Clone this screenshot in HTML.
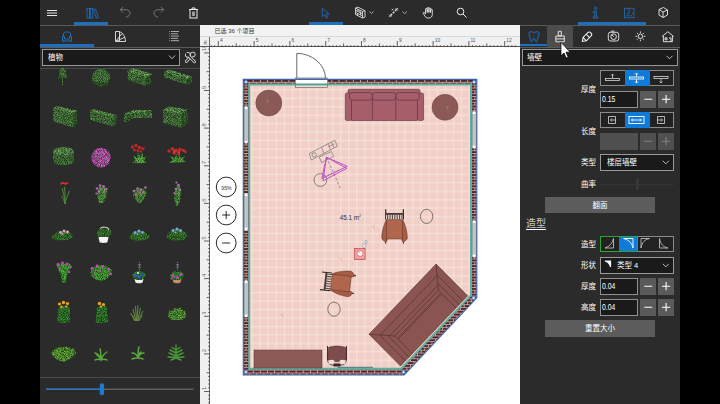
<!DOCTYPE html>
<html lang="zh">
<head>
<meta charset="utf-8">
<title>Floor plan</title>
<style>
html,body{margin:0;padding:0;background:#000;}
body{width:720px;height:404px;overflow:hidden;position:relative;font-family:"Liberation Sans","Noto Sans CJK SC",sans-serif;color:#fff;font-size:7.5px;line-height:1;}
.abs{position:absolute;}
#app{position:absolute;left:40px;top:0;width:640px;height:404px;background:#2b2b2b;overflow:hidden;}
#topbar{position:absolute;left:0;top:0;width:640px;height:25px;background:#2b2b2b;z-index:2;}
.hl{position:absolute;background:#1d6fbf;}
.gl{position:absolute;background:#5a5a5a;height:1px;}
/* left panel */
#left{position:absolute;left:0;top:25px;width:160px;height:379px;background:#2b2b2b;}
.dd{position:absolute;box-sizing:border-box;border:1px solid #979797;background:#1a1a1a;color:#fff;font-weight:400;}
.dd span{position:absolute;left:5px;top:50%;transform:translateY(-50%);margin-top:.8px;white-space:nowrap;}
/* canvas */
#canvas{position:absolute;left:160px;top:25px;width:320px;height:379px;background:#fff;}
#status{position:absolute;left:0;top:0;width:321px;height:12px;background:#f2f2f2;color:#333;}
/* right */
#right{position:absolute;left:480px;top:25px;width:160px;height:379px;background:#2b2b2b;}
.lbl{position:absolute;color:#fff;white-space:nowrap;text-align:right;width:40px;}
.inp{position:absolute;box-sizing:border-box;border:1px solid #909090;background:#1a1a1a;color:#fff;}
.inp span{position:absolute;left:1px;top:50%;font-size:8.200px;transform:translateY(-36%) scaleX(.83);transform-origin:left center;}
.btn{position:absolute;background:#5c5c5c;color:#fff;text-align:center;}
.sq{position:absolute;background:#5a5a5a;width:15.800px;height:16.500px;}
.seg{position:absolute;box-sizing:border-box;border:1px solid #8a8a8a;background:#222;}
</style>
</head>
<body>
<div id="app">
  <div id="topbar">
    <svg class="abs" style="left:0;top:0" width="640" height="26" viewBox="0 0 640 26" fill="none" stroke-linecap="butt">
      <!-- hamburger -->
      <path d="M7 10.5H17M7 13H17M7 15.5H17" stroke="#e6e6e6" stroke-width="1"/>
      <!-- library -->
      <g stroke="#1f74c8" stroke-width=".8" fill="none">
        <rect x="47" y="8.400" width="2.500" height="9.600"/><rect x="50.300" y="8.400" width="2.500" height="9.600"/>
        <path d="M53.600 9.600l2-.6 2.700 8.600-2 .6z"/>
      </g>
      <!-- undo -->
      <g stroke="#757575" stroke-width="1" stroke-linecap="round" stroke-linejoin="round">
        <path d="M82.700 7.300L80.300 9.700L82.700 12.100M80.300 9.700H86C88.500 9.700 90 11.300 90 13.300C90 15.200 88.500 16.600 86.300 17"/>
        <path d="M121.300 7.300L123.700 9.700L121.300 12.100M123.700 9.700H118C115.500 9.700 114 11.300 114 13.300C114 15.200 115.500 16.600 117.700 17"/>
      </g>
      <!-- trash -->
      <g stroke="#eee" stroke-width="1"><rect x="150" y="9.500" width="7" height="8.500"/><path d="M149 9.500h9M152 9.500v-1.500h3v1.500"/><rect x="152" y="11.500" width="3" height="4.500" fill="#999" stroke="none"/></g>
      <!-- cursor -->
      <path d="M282.300 8.300v8.400l2.400-2.100 1.700 3.500 1.300-.600-1.700-3.500h3.400z" stroke="#2468b0" stroke-width=".9"/>
      <!-- wall -->
      <g stroke="#ddd" stroke-width=".9"><path d="M315.500 8l7 3.500v6.500l-7-3.500zM315.500 8l2.500-.8 7 3.500-2.500.8M325 10.700v6.300l-2.500 1"/><path d="M315.500 10.200l7 3.500M315.500 12.400l7 3.500M318 9.300v2.200M320.500 12.700v2.200M317.500 13.500v2.200M320 10.300v2.200"/></g>
      <path d="M329.500 11.500l2 2 2-2" stroke="#bbb" stroke-width=".9"/>
      <!-- measure -->
      <g stroke="#ddd" stroke-width="1"><path d="M350.500 15.500l6-6" stroke-width="1.500" stroke-dasharray="2.200 1"/><path d="M349 14.500l2.600 2.600M349 17.100l2.600-2.600M355.500 8l2.600 2.600M355.500 10.600l2.600-2.600M351.800 8.800l1.500 1.500M351.800 10.300l1.500-1.500" stroke-width=".8"/></g>
      <path d="M362.500 11.500l2.200 2.200 2.200-2.200" stroke="#bbb" stroke-width=".9"/>
      <!-- hand -->
      <path d="M385.500 14V9.300a.85 .85 0 0 1 1.700 0V12.500M387.200 12.500V8.300a.85 .85 0 0 1 1.700 0V12.500M388.900 12.500V8.800a.85 .85 0 0 1 1.700 0V12.500M390.600 12.500V10a.85 .85 0 0 1 1.700 0V14.500C392.300 16.500 391 18 389 18H388C386.500 18 385.500 17.200 384.800 16L383.200 13.300C382.900 12.600 383.800 12 384.400 12.600L385.500 14" stroke="#eee" stroke-width=".85" stroke-linejoin="round"/>
      <!-- search -->
      <g stroke="#eee" stroke-width="1"><circle cx="420.500" cy="11.500" r="3.300"/><path d="M423 14l3.500 3.500"/></g>
      <!-- info -->
      <g fill="#1d6fbf" fill-opacity=".35" stroke="#1d6fbf" stroke-width=".7"><circle cx="555.600" cy="8.300" r="1.200"/><path d="M553.800 11h2.700v5.800h1.300v1.300h-4.800v-1.300h1.300v-4.500h-1.300z"/></g>
      <!-- plan -->
      <g stroke="#2466ad" stroke-width=".9"><rect x="584.500" y="8.300" width="9.500" height="9.400"/><path d="M589 8.500v5h-2M594 13.500h-2M586 15.800h6" /></g>
      <!-- 3d -->
      <g stroke="#eee" stroke-width=".9"><path d="M619 9.500l4.500-2 4 2.500v5l-4.500 2.500-4-2.500z"/><path d="M619 9.500l4 2.500 4.500-2M623 12v5.500"/></g>
    </svg>
    <div class="hl" style="left:34px;top:22.300px;width:34px;height:3.200px"></div>
    <div class="hl" style="left:269px;top:22.300px;width:34px;height:3.200px"></div>
    <div class="hl" style="left:538px;top:22.300px;width:68px;height:3.200px"></div>
    <div class="gl" style="left:0;top:25px;width:160px"></div>
    
  </div>
  <div id="left">
    <div class="gl" style="left:0;top:0;width:160px"></div>
    <div class="hl" style="left:0;top:19px;width:54px;height:3px"></div>
    <div class="gl" style="left:0;top:21.500px;width:160px"></div>
    <div class="dd" style="left:2px;top:24px;width:138px;height:17px"><span>植物</span></div>
    <div class="gl" style="left:0;top:43px;width:160px;background:#4a4a4a"></div>
    <div class="gl" style="left:0;top:352px;width:160px;background:#4a4a4a"></div>
    <svg class="abs" style="left:0;top:0" width="160" height="379" viewBox="40 25 160 379" fill="none">
      <!-- tab icons -->
      <g stroke="#1d6fbf" stroke-width="1"><path d="M63.500 36.500v-2.500c0-1.500 1.500-2 3.500-2s3.500.5 3.500 2v2.500"/><path d="M62.500 36.500h2v2.500h5v-2.500h2v4.500h-9zM63.500 41v1M70.500 41v1"/></g>
      <g stroke="#e8e8e8" stroke-width=".9"><path d="M115.500 31.500h4v10h-4zM119.500 31.800c3.500 1 6 5 6 9.700h-6M116 41l6-7.500M116.500 41.200l8.300-4"/></g>
      <g stroke="#aaa" stroke-width="1"><path d="M171 31.500h8M171 33.800h7M171 36.100h8M171 38.400h7M171 40.700h8"/><path d="M169 31.500h1M169 33.800h1M169 36.100h1M169 38.400h1M169 40.700h1" stroke="#888"/></g>
      <path d="M169 55.500l3 3.200 3-3.200" stroke="#ccc" stroke-width=".9"/>
      <!-- wrench -->
      <g stroke-linecap="round"><path d="M193.300 54L186.300 61.500" stroke="#e4e4e4" stroke-width="2.800"/><circle cx="192.800" cy="54.500" r="2.700" fill="#e4e4e4"/><path d="M193.300 54L186.300 61.500" stroke="#2b2b2b" stroke-width="1.300"/><circle cx="192.800" cy="54.500" r="1.900" fill="#2b2b2b"/><path d="M188 55L194.500 61.800" stroke="#e4e4e4" stroke-width="2.800"/><circle cx="187.800" cy="54.800" r="2.800" fill="#e4e4e4"/><path d="M188 55L194.500 61.800" stroke="#2b2b2b" stroke-width="1.300"/><circle cx="187.800" cy="54.800" r="2" fill="#2b2b2b"/><path d="M186.800 53.800l-2-2" stroke="#2b2b2b" stroke-width="1.600"/></g>
      <!-- slider -->
      <path d="M46 389.200H193.500" stroke="#777" stroke-width="1"/><path d="M46 389.200H101" stroke="#2a74c2" stroke-width="1.400"/><rect x="99.800" y="383.200" width="4.300" height="12" rx="2" fill="#1f7ad6"/>
      
      <defs>
        <filter id="nz" x="0" y="0" width="100%" height="100%" color-interpolation-filters="sRGB"><feTurbulence type="fractalNoise" baseFrequency="1.300" numOctaves="1" seed="4" result="t"/><feColorMatrix in="t" type="matrix" values="2.400 0 0 0 -.700  2.400 0 0 0 -.700  2.400 0 0 0 -.700  0 0 0 0 1" result="n"/><feComposite in="SourceGraphic" in2="n" operator="arithmetic" k1=".850" k2=".450" k3="0" k4="0"/></filter>
      </defs>
      <g filter="url(#nz)">
      <!-- row1 -->
      <path d="M62.500 85v-9M62.500 79l-3-4M62.500 78l3-3" stroke="#4a7a34" stroke-width="1"/><ellipse cx="62.500" cy="72" rx="3.500" ry="4.500" fill="#436f39"/><ellipse cx="60" cy="77" rx="2.500" ry="2" fill="#3d6835"/><ellipse cx="65" cy="76" rx="2.500" ry="2" fill="#3d6835"/>
      <circle cx="101" cy="77.500" r="9.300" fill="#436f39"/><path d="M92 80a9.300 9.300 0 0 0 18 0c-5 3-13 3-18 0z" fill="#305829"/>
      <path d="M127 71l6-3 19 6-1 9-6 3-17-6z" fill="#436f39"/><path d="M127 71l6-3 19 6-6 3z" fill="#58894b"/><path d="M146 77l6-3-1 9-6 3z" fill="#305829"/>
      <path d="M164 72l5-2.500 23 7v6l-5 2-23-7z" fill="#436f39"/><path d="M164 72l5-2.500 23 7-5 2.500z" fill="#58894b"/><path d="M187 79l5-2.500v6l-5 2z" fill="#305829"/>
      <!-- row2 -->
      <path d="M53 108l4-2 20 4.500v14l-4 3-20-6z" fill="#436f39"/><path d="M53 108l4-2 20 4.500-4 2.500z" fill="#58894b"/><path d="M73 113l4-2.500v14l-4 3z" fill="#305829"/>
      <path d="M90 111l3-2 23.500 6v9l-3 2.500-23.500-6.500z" fill="#436f39"/><path d="M90 111l3-2 23.500 6-3 2z" fill="#58894b"/><path d="M113.500 117l3-2v9l-3 2.500z" fill="#305829"/>
      <path d="M124 114l10-4 18 0v8l-18 0-8 4.500-2-1z" fill="#436f39"/><path d="M124 114l10-4h18l-3 2.500h-14l-9 3.500z" fill="#58894b"/><path d="M126 116v6.500l8-4.500v-5z" fill="#355f2d"/>
      <path d="M163 110l6-3.500 18.500 3v13l-6 5.500-18.500-5z" fill="#436f39"/><path d="M163 110l6-3.500 18.500 3-6 4z" fill="#58894b"/><path d="M181.500 113.500l6-4v13l-6 5.500z" fill="#305829"/>
      <!-- row3 -->
      <path d="M53 151v10c0 2.500 4.700 4.500 10.500 4.500s10.500-2 10.500-4.500v-10z" fill="#3d6835"/><ellipse cx="63.500" cy="151" rx="10.500" ry="4" fill="#58894b"/>
      </g>
      <g filter="url(#nz)"><circle cx="101" cy="157.600" r="9.800" fill="#b553ab"/></g><g fill="#3f7d2e"><circle cx="101" cy="155.500" r="1.100"/><circle cx="96" cy="158" r="1.100"/><circle cx="104" cy="160" r="1.100"/><circle cx="107.500" cy="156" r="1"/><circle cx="99" cy="163" r="1"/><circle cx="104" cy="151.500" r="1"/><circle cx="95" cy="153" r="1"/></g>
      <g><g filter="url(#nz)"><path d="M139 163.500l-7-1 3-3-2-4 4 2 1-6 2 5 3-4 0 5 4-1-3 4 3 2z" fill="#4f9a3c"/></g><g fill="#b82a2a"><circle cx="132.500" cy="147" r="1.700"/><circle cx="136" cy="145.500" r="1.700"/><circle cx="139.500" cy="147.500" r="1.800"/><circle cx="143" cy="148.500" r="1.600"/><circle cx="134.500" cy="150" r="1.500"/><circle cx="138" cy="150.500" r="1.500"/><circle cx="141" cy="151.500" r="1.300"/></g></g>
      <g><g filter="url(#nz)"><path d="M177 162.500l-8 .5 4-3-3-4 5 2 1-4 2 4 2-4 1 4 4-2-2 4 3 2z" fill="#4f9a3c"/></g><g fill="#c22c28"><circle cx="169" cy="151" r="1.700"/><circle cx="172.500" cy="149" r="1.800"/><circle cx="176" cy="150.500" r="2"/><circle cx="180" cy="149.500" r="1.800"/><circle cx="183.500" cy="150.500" r="1.700"/><circle cx="185.500" cy="152" r="1.200"/><circle cx="174" cy="153" r="1.700"/><circle cx="178.500" cy="153.500" r="1.700"/></g><g fill="#e8382c"><circle cx="174.500" cy="151.500" r="1.300"/><circle cx="179" cy="152" r="1.200"/></g></g>
      <!-- row4 -->
      <g><path d="M65 204c-.5-6-1-10-3-16M65 204c0-6 .3-10-.5-17M65 204c1-5 2-8 4.500-13M65 204c-1-4-2-6-3.500-8" stroke="#4d8a3c" stroke-width="1"/><path d="M60.500 184l2.500-1.300 2.500 1.300 2.500-1.500" stroke="#d8302a" stroke-width="1.700"/></g>
      <g><g filter="url(#nz)"><path d="M99 203l-2-8 1-6 3-4 4 1 2 5-1 7-3 5z" fill="#4a8a3c"/></g><g fill="#b765b4"><circle cx="97" cy="188.500" r="1.300"/><circle cx="100" cy="185.500" r="1.300"/><circle cx="103.500" cy="186.500" r="1.300"/><circle cx="106.500" cy="189" r="1.200"/><circle cx="99" cy="191.500" r="1.200"/><circle cx="104" cy="192" r="1.200"/><circle cx="96.500" cy="193.500" r="1.100"/><circle cx="101.500" cy="189" r="1.100"/></g></g>
      <g><g filter="url(#nz)"><path d="M138 203l-5-7 1-5 5-3 6 1 2 4-3 6-3 4z" fill="#4a8238"/></g><g fill="#a8709f"><circle cx="134" cy="191" r="1.300"/><circle cx="137.500" cy="188.500" r="1.300"/><circle cx="141" cy="189.500" r="1.300"/><circle cx="145.500" cy="187.500" r="1.300"/><circle cx="143" cy="192.500" r="1.200"/><circle cx="136" cy="194.500" r="1.200"/><circle cx="139.500" cy="192" r="1.100"/></g></g>
      <g><g filter="url(#nz)"><path d="M176 206l-2-8 1-7 2-6 3 1 1 7-1 8-2 5z" fill="#4a8a3c"/></g><g fill="#a874ae"><circle cx="176" cy="189" r="1.300"/><circle cx="178.500" cy="185" r="1.300"/><circle cx="176.500" cy="182.500" r="1.100"/><circle cx="180" cy="190" r="1.200"/><circle cx="174.500" cy="193" r="1.100"/><circle cx="179" cy="194" r="1"/></g></g>
      <!-- row5 -->
      <g><g filter="url(#nz)"><path d="M51 237l4-4 4-2 5 1 5-1 3 3 1 3-5 3-9 .5-6-1.500z" fill="#356e2b"/></g><g fill="#dba7c0"><circle cx="60.500" cy="232.500" r="1.400"/><circle cx="64" cy="231" r="1.500"/><circle cx="67.500" cy="232" r="1.400"/><circle cx="62.500" cy="234" r="1"/></g></g>
      <g><path d="M98.500 237h10l-1 5c-1 1.200-7 1.200-8 0z" fill="#f4f4f4"/><g filter="url(#nz)"><path d="M96 235l2-5 4-3 5 0 4 3 1 4-4 3h-9z" fill="#356e2b"/></g><path d="M100 228.500l3-1.500 4 .5 2 2" stroke="#d9b9c8" stroke-width="1.100"/></g>
      <g><g filter="url(#nz)"><path d="M129 238l3-5 5-2 6 0 5 3 2 3-4 3-9 1-6-1.500z" fill="#356e2b"/></g><g fill="#78a8d8"><circle cx="135" cy="232.500" r="1.500"/><circle cx="139" cy="231" r="1.600"/><circle cx="142.500" cy="232.500" r="1.400"/><circle cx="137.500" cy="234" r="1"/></g></g>
      <g><g filter="url(#nz)"><path d="M166 237l3-5 5-3 6 0 5 3 3 4-4 4-10 1-6-2z" fill="#356e2b"/></g><g fill="#78a8d8"><circle cx="173" cy="230.500" r="1.500"/><circle cx="177" cy="229" r="1.600"/><circle cx="180.500" cy="230.500" r="1.500"/><circle cx="175.500" cy="232.500" r="1"/></g></g>
      <!-- row6 -->
      <g filter="url(#nz)"><path d="M56.500 265l4-2 4 1 5-1 2 3-4 8-2 9h-3l-2-8z" fill="#3a962f"/><path d="M90 272l4-5 6-2 7 1 5 4-3 7-6 4-7-1-5-4z" fill="#3d8f30"/></g>
      <g fill="#c24cb4"><circle cx="58" cy="264.500" r="1.400"/><circle cx="62.500" cy="263" r="1.400"/><circle cx="67" cy="264" r="1.400"/><circle cx="70.500" cy="267" r="1.300"/><circle cx="69" cy="272" r="1.200"/><circle cx="60" cy="269" r="1.100"/></g>
      <g fill="#c24cb4"><circle cx="92" cy="268.500" r="1.400"/><circle cx="97" cy="266" r="1.400"/><circle cx="103" cy="266.500" r="1.400"/><circle cx="108.500" cy="269.500" r="1.400"/><circle cx="111" cy="274" r="1.200"/><circle cx="100" cy="271" r="1.200"/><circle cx="95" cy="274" r="1.100"/></g>
      <g><path d="M139.500 262v9M138 264l3 4M141 264l-3 4" stroke="#cfd6d8" stroke-width=".5" stroke-dasharray="1 .8"/><path d="M134.500 279h9l-1 3.500c-1 1-6 1-7 0z" fill="#f0f0f0"/><g filter="url(#nz)"><ellipse cx="139" cy="275.500" rx="6.500" ry="4.500" fill="#2f7e2c"/></g><g fill="#3350d8"><circle cx="135.500" cy="275.500" r="1.500"/><circle cx="139.500" cy="277" r="1.500"/><circle cx="142.500" cy="274.500" r="1.300"/></g><circle cx="138" cy="273" r="1" fill="#e8ecf8"/></g>
      <g><path d="M177.500 262v9M176 264l3 4M179 264l-3 4" stroke="#cfd6d8" stroke-width=".5" stroke-dasharray="1 .8"/><path d="M172.500 279h9l-1 3.500c-1 1-6 1-7 0z" fill="#c98a68"/><g filter="url(#nz)"><ellipse cx="177" cy="275.500" rx="7" ry="4.500" fill="#2f7e2c"/></g><g fill="#d044b8"><circle cx="173" cy="275.500" r="1.500"/><circle cx="177.500" cy="277.500" r="1.500"/><circle cx="181" cy="274.500" r="1.400"/><circle cx="171.500" cy="278.500" r="1.100"/></g></g>
      <!-- row7 -->
      <g filter="url(#nz)"><path d="M57 322l1-14 3-3 4 1 3-1 2 4v13l-4 1h-6z" fill="#2f7229"/><path d="M95.500 322l1-13 3-4 4 1 3 0 1 4 1 12-5 1h-6z" fill="#2f7229"/></g>
      <g fill="#eea41c"><circle cx="59.500" cy="304" r="1.600"/><circle cx="63.500" cy="302.500" r="1.700"/><circle cx="67.500" cy="303.500" r="1.600"/><circle cx="61.500" cy="307" r="1.200"/><circle cx="66" cy="306.500" r="1.100"/></g>
      <g fill="#eea41c"><circle cx="99.500" cy="303.500" r="1.700"/><circle cx="103.500" cy="304.500" r="1.600"/><circle cx="101" cy="306.500" r="1.100"/></g>
      <g><path d="M136 321l-3-12M136.500 321l-1-15M137 321l1-16M137.500 321l3-13M138 321l5-10M135.500 321l-5-8M134.500 321l-2-6M139 321l3-6" stroke="#6a9440" stroke-width=".9"/></g>
      <g filter="url(#nz)"><path d="M167.500 316l2-6 3 1 2-3 3 1 3-2 2 3 3 1 .5 6-4 3h-11z" fill="#4f8a35"/></g>
      <!-- row8 -->
      <g filter="url(#nz)"><path d="M50.500 353l6-5 8-1.500 9 2 3 4.500-5 5-8 4-8-3z" fill="#528f2e"/></g>
      <g stroke="#5aa63c" stroke-width="1.500" stroke-linecap="round"><path d="M101 360c-1-4-3-6-6-7M101 360c0-5 0-8-1-11M101 360c1-4 3-6 6-8M101 360c-2-1-4-1-6 0M101 360c2-1 4-1 6 0M101 360c-1-3-2-4-4-5"/></g>
      <g stroke="#5aa63c" stroke-width="1.500" stroke-linecap="round"><path d="M138 358c-1-3-3-5-6-5M138 358c0-5 0-8 1-11M138 358c1-3 3-5 6-5M138 358c-2 0-4 0-6 1M138 358c2 0 3 0 5 1M138 358c1-3 1-5 3-6"/></g>
      <g stroke="#4a9a38" stroke-width="1.400" stroke-linecap="round"><path d="M176 357v-12M176 356l-7-3M176 356l7-3M176 353l-6-3M176 353l6-3M176 350l-4-2.500M176 350l4-2.500M176 357.500l-8-.5M176 357.500l8-.5M176 358l-5 2M176 358l5 2"/></g>
    </svg>
  </div>
  <div id="canvas">
    <div id="status"><span class="abs" style="left:14.500px;top:3px;font-size:6px;white-space:nowrap;color:#333">已选 36 个项目</span></div>
    <div class="abs" style="left:0;top:10.500px;width:321px;height:1.500px;background:#dadada"></div>
    <div class="abs" style="left:0;top:12px;width:321px;height:9.500px;background:#f0f0f0"></div>
    <div class="abs" style="left:0;top:12px;width:9.500px;height:367px;background:#f0f0f0"></div>
    <div class="abs" style="left:0;top:21px;width:321px;height:1px;background:#555"></div>
    <div class="abs" style="left:9px;top:12px;width:1px;height:367px;background:#666"></div>
    <svg class="abs" style="left:0;top:0" width="321" height="379" viewBox="200 25 321 379" fill="none">
      <!--RULER--><clipPath id="vclip"><rect x="200" y="47.300" width="10" height="357"/></clipPath><path d="M211.1 46.500v-1.3M214.7 46.500v-1.3M218.3 46.500v-5.5M221.9 46.500v-1.3M225.5 46.500v-1.3M229.0 46.500v-1.3M232.6 46.500v-1.3M236.2 46.500v-3M239.8 46.500v-1.3M243.4 46.500v-1.3M246.9 46.500v-1.3M250.5 46.500v-1.3M254.1 46.500v-5.5M257.7 46.500v-1.3M261.3 46.500v-1.3M264.8 46.500v-1.3M268.4 46.500v-1.3M272.0 46.500v-3M275.6 46.500v-1.3M279.2 46.500v-1.3M282.7 46.500v-1.3M286.3 46.500v-1.3M289.9 46.500v-5.5M293.5 46.500v-1.3M297.1 46.500v-1.3M300.6 46.500v-1.3M304.2 46.500v-1.3M307.8 46.500v-3M311.4 46.500v-1.3M315.0 46.500v-1.3M318.5 46.500v-1.3M322.1 46.500v-1.3M325.7 46.500v-5.5M329.3 46.500v-1.3M332.9 46.500v-1.3M336.4 46.500v-1.3M340.0 46.500v-1.3M343.6 46.500v-3M347.2 46.500v-1.3M350.8 46.500v-1.3M354.3 46.500v-1.3M357.9 46.500v-1.3M361.5 46.500v-5.5M365.1 46.500v-1.3M368.7 46.500v-1.3M372.2 46.500v-1.3M375.8 46.500v-1.3M379.4 46.500v-3M383.0 46.500v-1.3M386.6 46.500v-1.3M390.1 46.500v-1.3M393.7 46.500v-1.3M397.3 46.500v-5.5M400.9 46.500v-1.3M404.5 46.500v-1.3M408.0 46.500v-1.3M411.6 46.500v-1.3M415.2 46.500v-3M418.8 46.500v-1.3M422.4 46.500v-1.3M425.9 46.500v-1.3M429.5 46.500v-1.3M433.1 46.500v-5.5M436.7 46.500v-1.3M440.3 46.500v-1.3M443.8 46.500v-1.3M447.4 46.500v-1.3M451.0 46.500v-3M454.6 46.500v-1.3M458.2 46.500v-1.3M461.7 46.500v-1.3M465.3 46.500v-1.3M468.9 46.500v-5.5M472.5 46.500v-1.3M476.1 46.500v-1.3M479.6 46.500v-1.3M483.2 46.500v-1.3M486.8 46.500v-3M490.4 46.500v-1.3M494.0 46.500v-1.3M497.5 46.500v-1.3M501.1 46.500v-1.3M504.7 46.500v-5.5M508.3 46.500v-1.3M511.9 46.500v-1.3M515.4 46.500v-1.3" stroke="#222" stroke-width=".7"/><path d="M209.500 49.1h-1.3M209.500 52.9h-5.5M209.500 56.6h-1.3M209.500 60.4h-1.3M209.500 64.2h-1.3M209.500 67.9h-1.3M209.500 71.7h-3M209.500 75.4h-1.3M209.500 79.2h-1.3M209.500 83.0h-1.3M209.500 86.7h-1.3M209.500 90.5h-5.5M209.500 94.3h-1.3M209.500 98.0h-1.3M209.500 101.8h-1.3M209.500 105.6h-1.3M209.500 109.3h-3M209.500 113.1h-1.3M209.500 116.8h-1.3M209.500 120.6h-1.3M209.500 124.4h-1.3M209.500 128.1h-5.5M209.500 131.9h-1.3M209.500 135.7h-1.3M209.500 139.4h-1.3M209.500 143.2h-1.3M209.500 146.9h-3M209.500 150.7h-1.3M209.500 154.5h-1.3M209.500 158.2h-1.3M209.500 162.0h-1.3M209.500 165.8h-5.5M209.500 169.5h-1.3M209.500 173.3h-1.3M209.500 177.0h-1.3M209.500 180.8h-1.3M209.500 184.6h-3M209.500 188.3h-1.3M209.500 192.1h-1.3M209.500 195.9h-1.3M209.500 199.6h-1.3M209.500 203.4h-5.5M209.500 207.2h-1.3M209.500 210.9h-1.3M209.500 214.7h-1.3M209.500 218.4h-1.3M209.500 222.2h-3M209.500 226.0h-1.3M209.500 229.7h-1.3M209.500 233.5h-1.3M209.500 237.3h-1.3M209.500 241.0h-5.5M209.500 244.8h-1.3M209.500 248.5h-1.3M209.500 252.3h-1.3M209.500 256.1h-1.3M209.500 259.8h-3M209.500 263.6h-1.3M209.500 267.4h-1.3M209.500 271.1h-1.3M209.500 274.9h-1.3M209.500 278.6h-5.5M209.500 282.4h-1.3M209.500 286.2h-1.3M209.500 289.9h-1.3M209.500 293.7h-1.3M209.500 297.5h-3M209.500 301.2h-1.3M209.500 305.0h-1.3M209.500 308.8h-1.3M209.500 312.5h-1.3M209.500 316.3h-5.5M209.500 320.0h-1.3M209.500 323.8h-1.3M209.500 327.6h-1.3M209.500 331.3h-1.3M209.500 335.1h-3M209.500 338.9h-1.3M209.500 342.6h-1.3M209.500 346.4h-1.3M209.500 350.1h-1.3M209.500 353.9h-5.5M209.500 357.7h-1.3M209.500 361.4h-1.3M209.500 365.2h-1.3M209.500 369.0h-1.3M209.500 372.7h-3M209.500 376.5h-1.3M209.500 380.3h-1.3M209.500 384.0h-1.3M209.500 387.8h-1.3M209.500 391.5h-5.5M209.500 395.3h-1.3M209.500 399.1h-1.3M209.500 402.8h-1.3" stroke="#222" stroke-width=".7"/>
      <g font-size="4.900" fill="#555" font-family="Liberation Sans, sans-serif"><text x="219.9" y="42">4</text><text x="255.7" y="42">5</text><text x="291.5" y="42">6</text><text x="327.3" y="42">7</text><text x="363.1" y="42">8</text><text x="398.9" y="42">9</text><text x="434.7" y="42">10</text><text x="470.5" y="42">11</text><text x="506.3" y="42">12</text><g clip-path="url(#vclip)" font-size="5.800" fill="#666"><text transform="translate(206.200 389.9) rotate(-90)">1</text><text transform="translate(206.200 352.3) rotate(-90)">2</text><text transform="translate(206.200 314.7) rotate(-90)">3</text><text transform="translate(206.200 277.0) rotate(-90)">4</text><text transform="translate(206.200 239.4) rotate(-90)">5</text><text transform="translate(206.200 201.8) rotate(-90)">6</text><text transform="translate(206.200 164.2) rotate(-90)">7</text><text transform="translate(206.200 126.5) rotate(-90)">8</text><text transform="translate(206.200 88.9) rotate(-90)">9</text><text transform="translate(206.200 51.3) rotate(-90)">10</text></g><text transform="translate(206.500 44.500) rotate(-90)">m</text></g><!--/RULER-->
      
      <defs>
        <pattern id="tile" x="251.450" y="122.900" width="8.050" height="8.450" patternUnits="userSpaceOnUse"><rect width="8.050" height="8.450" fill="#f1cfc6"/><path d="M.65 0V8.450M0 .65H8.050" stroke="#f6dfd9" stroke-width="1.300"/></pattern>
        <pattern id="brk" x="245.600" y="79.900" width="7.150" height="5.700" patternUnits="userSpaceOnUse"><rect width="7.150" height="5.700" fill="#4b262a"/><path d="M0 2.450H7.150M0 5.300H7.150" stroke="#e3b9af" stroke-width=".8"/><path d="M.4 0V2.400M3.975 2.850V5.300" stroke="#e3b9af" stroke-width=".85"/></pattern>
      </defs>
      <!-- door -->
      <path d="M296.800 79V53.400A28.800 25.600 0 0 1 325.600 79" stroke="#444" stroke-width=".8" fill="#fff"/>
      <!-- floor -->
      <path d="M249 85H471V296L401.500 368.500H249z" fill="url(#tile)"/>
      <!-- walls: brick ring, outer blue line, teal inner -->
      <path d="M243.500 79.500H476.500V297.700L404 374.800H243.500zM249.200 84.500V368.800H401.200L471 295.200V84.500z" fill="url(#brk)" fill-rule="evenodd"/>
      <path d="M243.300 79.300H476.800V297.800L404.200 375H243.300z" stroke="#3f62aa" stroke-width="1.150" fill="none"/>
      <path d="M249.200 84.500H471V295.200L401.200 368.800H249.200z" stroke="#60afa3" stroke-width="2" fill="none"/>
      <!-- door frame -->
      <rect x="295.500" y="78" width="32" height="9.300" fill="#f7dcd5" stroke="#555" stroke-width=".6"/><rect x="295.800" y="80" width="31.400" height="3.500" fill="#fff"/><rect x="295.800" y="78.500" width="31.400" height="1.500" fill="#4565ad"/><rect x="295.800" y="83.500" width="31.400" height="2" fill="#55a596"/>
      <!-- windows -->
      <g id="winL"><rect x="244.100" y="107" width="4" height="35.500" fill="#d3dadc" stroke="#5a6676" stroke-width=".6"/><path d="M246.100 108.500v32.500" stroke="#8e989e" stroke-width=".6"/><rect x="244.700" y="106.300" width="2.800" height="2.600" fill="#fff"/><rect x="244.700" y="140.700" width="2.800" height="2.600" fill="#fff"/></g>
      <use href="#winL" y="87"/><use href="#winL" y="174"/>
      <use href="#winL" x="228" y="5"/><use href="#winL" x="228" y="114"/>
      <!-- corner handles -->
      <g fill="#e8f4ff" stroke="#4a8ae0" stroke-width=".9"><circle cx="246" cy="82" r="1.500"/><circle cx="474" cy="82" r="1.500"/><circle cx="473.500" cy="298" r="1.500"/><circle cx="403.500" cy="372" r="1.500"/><circle cx="246" cy="372" r="1.500"/></g>
      <!-- round tables -->
      <circle cx="268.800" cy="103" r="13" fill="#8b5a57" stroke="#6a4040" stroke-width=".5"/>
      <circle cx="445" cy="107.300" r="13" fill="#8b5a57" stroke="#6a4040" stroke-width=".5"/>
      <path d="M266 100l1.500 1.500 1.500-1M267.500 101.500v1.500M446 106l1.500 1.500 1.500-1M447.500 107.500v1.500" stroke="#c89a80" stroke-width=".5"/>
      <!-- sofa -->
      <g stroke="#5a2c3c" stroke-width=".6" fill="#a65e6b"><rect x="348" y="89.300" width="72" height="10" rx="1.500"/><rect x="345.300" y="93" width="6.200" height="27.500" rx="1.800"/><rect x="417.400" y="93" width="6.200" height="27.500" rx="1.800"/><rect x="351.500" y="97" width="66" height="23.500"/><path d="M372.500 99v21.500M395.800 99v21.500" fill="none"/><rect x="349.500" y="92.500" width="22.800" height="7.700" rx="3"/><rect x="372.600" y="92.500" width="23" height="7.700" rx="3"/><rect x="396" y="92.500" width="23.300" height="7.700" rx="3"/></g>
      <!-- camera object -->
      <g stroke="#666" stroke-width=".6" fill="none"><path d="M309.200 153.600L334.900 140.200 337.300 146.300 311.300 160z"/><circle cx="314.200" cy="154.900" r="2.200"/><path d="M321.500 147.200l2.600 6.200M328 143.800l2.500 6M331.500 142l2.500 6M328.500 146.800l5.500-2.800"/><path d="M319.300 157l12.200-5.500 2 5-12 6z"/></g>
      <circle cx="320.400" cy="180" r="6.400" stroke="#444" stroke-width=".6" fill="none"/>
      <g stroke="#c050c4" fill="none" stroke-linejoin="round"><path d="M326.400 157.300L347.300 166.300 321.800 178.600z" stroke-width="1"/><path d="M326.400 157.300L346.800 168.300 323 180.800z" stroke-width="1"/><path d="M324 176.500L340 169.500" stroke-width=".6" stroke-dasharray="2 1.500"/></g>
      <path d="M326.400 157.300L341 189.500" stroke="#7a5a80" stroke-width=".7" stroke-dasharray="2.500 2"/>
      <!-- area text -->
      <text x="339.800" y="220" font-size="6.600" fill="#333" textLength="21.300" lengthAdjust="spacingAndGlyphs" font-family="Liberation Sans, sans-serif">45.1 m<tspan font-size="4" dy="-2.800">2</tspan></text>
      <!-- armchair 1 -->
      <g id="chair1"><path d="M385.700 209.300V219.500M403.400 209.300V219.500" stroke="#3a2a25" stroke-width="1.200"/><rect x="386.300" y="214.500" width="16.600" height="5" fill="#e6d6d0"/><path d="M387.600 214.500v5M390 214.500v5M392.400 214.500v5M394.800 214.500v5M397.200 214.500v5M399.600 214.500v5M402 214.500v5" stroke="#5a4a48" stroke-width="1.100"/><rect x="386" y="213" width="17.200" height="1.800" fill="#4a3836"/><path d="M386.200 220C383.500 225 381.800 232 381.700 238C382.500 240.500 384.500 241.800 386.700 241.800L387.500 239V220zM402.900 220C405.600 225 407.300 232 407.400 238C406.600 240.500 404.600 241.800 402.400 241.800L401.600 239V220z" fill="#a75d45" stroke="#5a3020" stroke-width=".5"/><rect x="386.700" y="219.800" width="15.700" height="19.200" fill="#b0664c" stroke="#5a3020" stroke-width=".5"/><path d="M385.300 241.700l.5 2M403.800 241.700l-.5 2" stroke="#3a2a25" stroke-width="1"/></g>
      <ellipse cx="426.600" cy="216.400" rx="6.200" ry="7.100" stroke="#333" stroke-width=".6"/>
      <ellipse cx="334" cy="309.200" rx="6.200" ry="7.100" stroke="#333" stroke-width=".6"/>
      <use href="#chair1" transform="translate(337.500 282.700) rotate(-83.600) translate(-394.500 -226)"/>
      <!-- small pink icon -->
      <rect x="354.500" y="248.400" width="10.600" height="11.200" fill="#f0a0a0" stroke="#c24848" stroke-width=".7"/><circle cx="360" cy="253.500" r="2.800" fill="#fff" stroke="#c24848" stroke-width=".5"/><path d="M358.500 251.500l2 2" stroke="#933" stroke-width=".5"/>
      <g fill="#fff" stroke="#4a6aa0" stroke-width=".5"><circle cx="366" cy="241.800" r="1.300"/><circle cx="364.300" cy="245.600" r="1.600"/></g>
      <!-- y marks -->
      <g stroke="#c8a890" stroke-width=".5"><path d="M371 225.500l2.500 1 1.500-2M373.500 226.500l.5 2.500M338.500 258l2.500 1 1.500-2M341 259l.5 2.500M280 314.500l2.500 1 1.500-2M282.500 315.500l.5 2.500"/></g>
      <!-- big sofa diamond -->
      <g transform="matrix(-.691 .723 .705 .711 436.100 264)" stroke="#47282a" stroke-width=".5" fill="none"><rect x="0" y="0" width="97.100" height="44.700" fill="#8a5450"/><path d="M90 44.700V8.700H7V44.700M84.800 44.700V16H12.300V44.700M80 44.700V24.500H17V44.700M0 0L17 20M97.100 0L80 20"/><rect x="17" y="20" width="63" height="3.200" fill="#8f5854"/></g>
      <!-- desk -->
      <rect x="254" y="350" width="68" height="18" fill="#8b5a57" stroke="#5a3a38" stroke-width=".5"/>
      <!-- office chair -->
      <g><path d="M328.500 347.500c5-2 12-2 17 0l1 12c-5 3-14 3-19 0z" fill="#7d4d4d" stroke="#4a2a2a" stroke-width=".5"/><path d="M327.500 346v13c0 4 3 6 5 6h9c2 0 5-2 5-6v-13" stroke="#4a2a2a" stroke-width="1" fill="none"/><ellipse cx="331.500" cy="362" rx="3" ry="2.200" fill="#f0e0dc"/><ellipse cx="342.500" cy="362" rx="3" ry="2.200" fill="#f0e0dc"/><rect x="333.500" y="363.500" width="7" height="3" fill="#3a2a2a"/></g>
      <path d="M337.500 367.300H373" stroke="#3d7a78" stroke-width="1"/>
      <!-- zoom buttons -->
      <g fill="#fff" stroke="#111" stroke-width=".9"><circle cx="226.200" cy="187" r="9.900"/><circle cx="226.200" cy="215" r="9.900"/><circle cx="226.200" cy="243" r="9.900"/></g>
      <path d="M222.200 215h8M226.200 211v8M222.200 243h8" stroke="#111" stroke-width=".9"/>
      <text x="221.300" y="189.600" font-size="6.200" fill="#333" textLength="10.300" lengthAdjust="spacingAndGlyphs" font-family="Liberation Sans, sans-serif">95%</text>
      
      

    </svg>
  </div>
  <div id="right">
    <div class="abs" style="left:1px;top:0;width:159px;height:379px">
    <div class="gl" style="left:-1px;top:0;width:160px"></div>
    <div class="abs" style="left:26px;top:0;width:26px;height:21.500px;background:#4d4d4d"></div>
    <div class="hl" style="left:-1px;top:18.600px;width:27px;height:2.700px"></div>
    <div class="gl" style="left:-1px;top:21.500px;width:160px"></div>
    <div class="dd" style="left:1px;top:24px;width:155.500px;height:16.500px"><span style="left:4px">墙壁</span></div>
    <!-- thickness -->
    <div class="seg" style="left:79px;top:45px;width:74px;height:16px"></div>
    <div class="abs" style="left:104px;top:45px;width:24.500px;height:16px;background:#0f7ad8"></div>
    <div class="lbl" style="left:35px;top:60.500px">厚度</div>
    <div class="inp" style="left:79px;top:66px;width:38px;height:16.500px"><span>0.15</span></div>
    <div class="sq" style="left:119px;top:66px"></div><div class="sq" style="left:137px;top:66px"></div>
    <!-- length -->
    <div class="seg" style="left:79px;top:87px;width:74px;height:16px"></div>
    <div class="abs" style="left:104px;top:87px;width:24.500px;height:16px;background:#0f7ad8"></div>
    <div class="lbl" style="left:35px;top:102.500px">长度</div>
    <div class="abs" style="left:79px;top:108px;width:38px;height:16.500px;background:#4f4f4f"></div>
    <div class="sq" style="left:119px;top:108px;background:#4f4f4f"></div><div class="sq" style="left:137px;top:108px;background:#4f4f4f"></div>
    <!-- type -->
    <div class="lbl" style="left:35px;top:133.500px">类型</div>
    <div class="dd" style="left:79px;top:129px;width:74px;height:16.500px;border-color:#999"><span style="left:6px">楼层墙壁</span></div>
    <div class="lbl" style="left:35px;top:155.500px">曲率</div>
    <div class="abs" style="left:79px;top:159px;width:74px;height:1px;background:#353535"></div>
    <div class="abs" style="left:115px;top:153px;width:3px;height:12px;background:#373737;border-radius:1.500px"></div>
    <div class="btn" style="left:24px;top:171.500px;width:110px;height:16.500px;line-height:18px">翻面</div>
    <div class="abs" style="left:5px;top:194px;font-size:10px;font-weight:300;text-decoration:underline;text-underline-offset:1.500px;text-decoration-thickness:.6px">造型</div>
    <div class="lbl" style="left:35px;top:216px">造型</div>
    <div class="seg" style="left:79px;top:210.500px;width:74px;height:16.500px"></div>
    <div class="abs" style="left:97.500px;top:210.500px;width:18.500px;height:16.500px;background:#0f7ad8"></div>
    <div class="abs" style="left:79px;top:210.500px;width:37.500px;height:16.500px;box-sizing:border-box;border:1px solid #2fa535"></div>
    <div class="lbl" style="left:35px;top:237.200px">形状</div>
    <div class="dd" style="left:79px;top:232px;width:74px;height:16.500px;border-color:#999"><span style="left:16px">类型 4</span></div>
    <div class="lbl" style="left:35px;top:257.500px">厚度</div>
    <div class="inp" style="left:79px;top:253px;width:38px;height:16.500px"><span>0.04</span></div>
    <div class="sq" style="left:119px;top:253px"></div><div class="sq" style="left:137px;top:253px"></div>
    <div class="lbl" style="left:35px;top:278.500px">高度</div>
    <div class="inp" style="left:79px;top:274px;width:38px;height:16.500px"><span>0.04</span></div>
    <div class="sq" style="left:119px;top:274px"></div><div class="sq" style="left:137px;top:274px"></div>
    <div class="btn" style="left:24px;top:295px;width:110px;height:16.500px;line-height:18px">重置大小</div>
    <svg class="abs" style="left:0;top:0" width="159" height="379" viewBox="521 25 159 379" fill="none">
      
      <!-- tab icons -->
      <path d="M529 34.500C528.500 32 530.500 31 532.500 32C533.500 32.500 534.500 32.500 535.500 32C537.500 31 539.500 32 539 34.500C538.800 36 538 37 537.800 38.500C537.600 40 537.300 41.800 536.300 41.800C535.300 41.800 535.300 38.500 534 38.500C532.700 38.500 532.700 41.800 531.700 41.800C530.700 41.800 530.400 40 530.200 38.500C530 37 529.200 36 529 34.500z" stroke="#1f74c8" stroke-width=".9" fill="#1d6fbf" fill-opacity=".1"/>
      <g stroke="#f0f0f0" stroke-width=".9"><path d="M558.300 31.300h3v4.700h-3zM555.900 36h8.400v5.800h-8.400zM555.900 38.900h8.400"/></g>
      <g stroke="#f0f0f0" stroke-width=".9" transform="translate(587.100 36.700) rotate(-45) scale(1.130)"><path d="M-3 -2.100H2.700a2.100 2.100 0 0 1 0 4.200H-3L-5.900 0zM1 -2.100V2.100M-3 -2.100V2.100"/></g>
      <g stroke="#f0f0f0" stroke-width=".9"><rect x="608.300" y="32.300" width="10.400" height="8.700" rx="2.200"/><circle cx="613.600" cy="36.700" r="2.800"/><path d="M610.300 32.300l1.200-1.200h3M611.800 34.800l2 2"/></g>
      <g stroke="#f0f0f0" stroke-width=".9"><circle cx="640.400" cy="36.300" r="2.200"/><path d="M640.400 31.400v1.700M640.400 39.500v1.700M635.500 36.300h1.700M643.600 36.300h1.700M637 32.900l1.200 1.200M642.600 38.500l1.200 1.200M637 39.700l1.200-1.200M642.600 34.100l1.200-1.200"/></g>
      <g stroke="#f0f0f0" stroke-width=".9"><path d="M662 36.500l5.800-4.800 5.800 4.800M663.400 36v5.700h9v-5.700"/><path d="M665 37.800h2v2h-2zM669 38h2v3.700"/></g>
      <!-- mouse cursor -->
      <path d="M561 42.300v13.500l3-2.800 2.200 5 2-.9-2.200-4.900h4.200z" fill="#fff" stroke="#000" stroke-width=".7"/>
      <!-- dropdown chevrons -->
      <g stroke="#ccc" stroke-width=".9"><path d="M666.500 55.800l3 3 3-3M662.800 160.800l3 3 3-3M662.800 263.800l3 3 3-3"/></g>
      <!-- thickness seg icons -->
      <g stroke="#d8d8d8" stroke-width=".8"><rect x="605.500" y="78.500" width="14" height="2"/><path d="M612.500 78v-4M611 75.500l1.500-1.500 1.500 1.500"/><rect x="654" y="76.500" width="14" height="2"/><path d="M661 79v4M659.500 81.500l1.500 1.500 1.500-1.500"/></g>
      <g stroke="#fff" stroke-width=".9"><rect x="629.500" y="77" width="14" height="2"/><path d="M636.500 76.500v-3.500M635 74.500l1.500-1.500 1.500 1.500M636.500 79.500v3.500M635 81.500l1.500 1.500 1.500-1.500"/></g>
      <!-- length seg icons -->
      <g stroke="#d8d8d8" stroke-width=".8"><path d="M608.500 116.500v7h7v-7zM616 120h-5.500M612 118.500l-1.500 1.500 1.500 1.500"/><path d="M657.500 116.500v7h7v-7zM657 120h5.500M661 118.500l1.500 1.500-1.500 1.500"/></g>
      <g stroke="#fff" stroke-width=".9"><rect x="629" y="116.500" width="15" height="7"/><path d="M631.500 120h10M633 118.500l-1.500 1.500 1.500 1.500M640 118.500l1.500 1.500-1.500 1.500"/></g>
      <!-- +/- -->
      <g stroke="#fff" stroke-width="1.100"><path d="M644.300 99.200h8M662 99.200h8.200M666.100 95.100v8.200M644.300 286.200h8M662 286.200h8.200M666.100 282.100v8.200M644.300 307.200h8M662 307.200h8.200M666.100 303.100v8.200"/></g>
      <g stroke="#848484" stroke-width="1.100"><path d="M644.300 141.200h8M662 141.200h8.200M666.100 137.100v8.200"/></g>
      <!-- moulding icons -->
      <g stroke="#ccc" stroke-width=".8"><path d="M605 248h8.500v-9.500c-1 5-4 8-8.500 9.500z"/><path d="M641 248v-9.500h8.500c-5 1-7.500 4-8.500 9.500z"/><path d="M659.500 238.500v9.500h8.500c-5-1-7.500-4-8.500-9.500z"/></g>
      <path d="M623.500 238.500h9.500v9.500c-1-5-4-8-9.500-9.500z" stroke="#fff" stroke-width=".9"/>
      <path d="M605 261h5.500v6c-.6-3-2.200-5-5.500-6z" stroke="#fff" stroke-width="1.200" fill="#fff"/>

    </svg>
    </div>
  </div>
</div>
</body>
</html>
